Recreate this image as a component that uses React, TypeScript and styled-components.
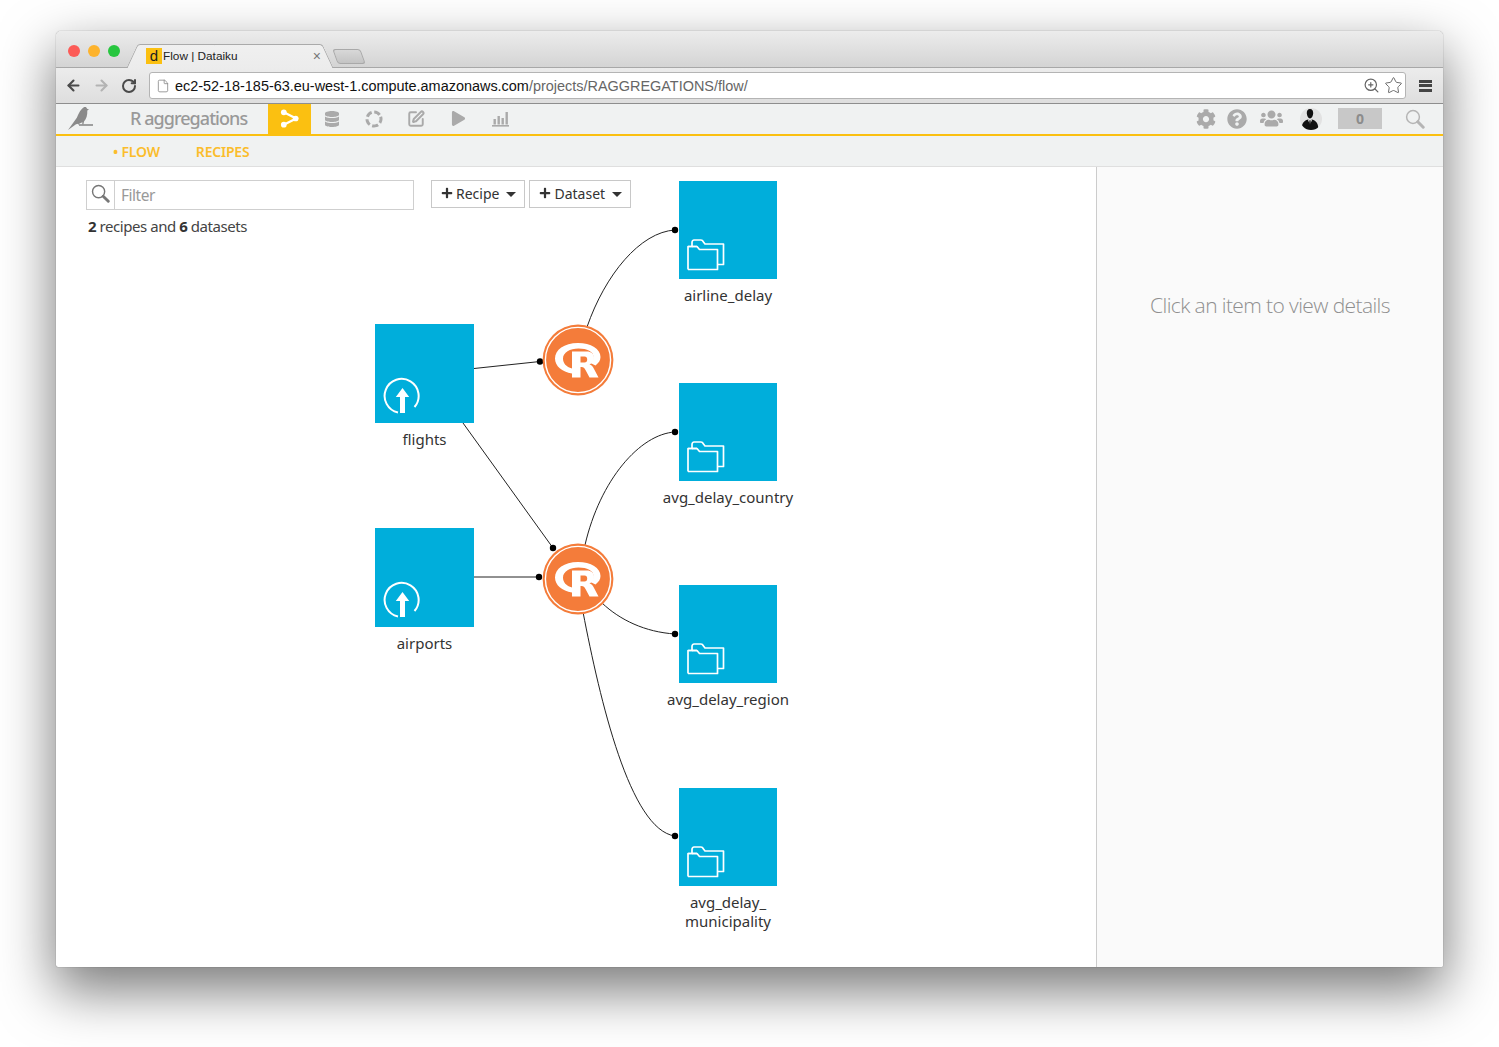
import React from 'react';
import styled, { createGlobalStyle } from 'styled-components';
import { ArrowLeft, ArrowRight, RotateCw, File, ZoomIn, Star, SquarePen } from 'lucide-react';
import { FaCog, FaQuestionCircle, FaUsers, FaDatabase, FaPlay, FaPlus } from 'react-icons/fa';

const UI_FONT = '"Noto Sans", "Open Sans", sans-serif';

const GlobalStyle = createGlobalStyle`
  html, body {
    margin: 0;
    padding: 0;
    background: #fff;
    overflow: hidden;
    height: 100%;
  }
  * { box-sizing: border-box; }
`;

const Page = styled.div`
  width: 1499px;
  height: 1047px;
  padding: 31px 56px 80px 56px;
  background: #fff;
`;

const Window = styled.div`
  width: 1387px;
  height: 936px;
  display: flex;
  flex-direction: column;
  border-radius: 5px 5px 2px 2px;
  box-shadow: 0 22px 54px 2px rgba(0, 0, 0, 0.52), 0 0 1px rgba(0, 0, 0, 0.6);
  overflow: hidden;
  background: #fff;
`;

const TabStrip = styled.div`
  height: 37px;
  flex: none;
  display: flex;
  align-items: flex-end;
  position: relative;
  padding-left: 84px;
  background: linear-gradient(#ececec, #d4d4d4);
  border-bottom: 1px solid #a8a8a8;
`;

const Light = styled.span<{ $color: string; $left: number }>`
  position: absolute;
  top: 14px;
  left: ${(p) => p.$left}px;
  width: 12px;
  height: 12px;
  border-radius: 50%;
  background: ${(p) => p.$color};
`;

const Tab = styled.div`
  position: relative;
  width: 180px;
  height: 24px;
  margin-bottom: -1px;
  display: flex;
  align-items: center;
  gap: 1px;
  padding: 0 0 0 6px;
  font-family: "Liberation Sans", Arial, sans-serif;
  font-size: 11.8px;
  color: #222;
  z-index: 1;

  &::before,
  &::after {
    content: '';
    position: absolute;
    top: 0;
    bottom: 0;
    width: 60%;
    background: linear-gradient(#f0f0f0, #ececec);
    border-top: 1px solid #aaa;
    z-index: -1;
  }
  &::before {
    left: -8px;
    transform: skewX(-25deg);
    border-left: 1px solid #aaa;
    border-radius: 3px 0 0 0;
  }
  &::after {
    right: -8px;
    transform: skewX(25deg);
    border-right: 1px solid #aaa;
    border-radius: 0 3px 0 0;
  }
`;

const Favicon = styled.span`
  width: 16px;
  height: 16px;
  flex: none;
  background: #fbc011;
  color: #222;
  font-size: 15px;
  line-height: 15px;
  text-align: center;
`;

const TabClose = styled.span`
  margin-left: auto;
  margin-right: -1px;
  color: #777;
  font-size: 14px;
`;

const NewTab = styled.div`
  width: 28px;
  height: 15px;
  margin: 0 0 3px 15px;
  border: 1px solid #a9a9a9;
  border-radius: 3px;
  background: linear-gradient(#d8d8d8, #c4c4c4);
  transform: skewX(20deg);
`;

const AddressRow = styled.div`
  height: 36px;
  flex: none;
  display: flex;
  align-items: center;
  padding: 0 11px 0 9px;
  gap: 11px;
  background: linear-gradient(#ececec, #dedede);
  border-bottom: 1px solid #8e8e8e;
`;

const NavButton = styled.span<{ $faded?: boolean }>`
  display: flex;
  color: ${(p) => (p.$faded ? '#b3b3b3' : '#4a4a4a')};
`;

const AddressBar = styled.div`
  flex: 1;
  height: 27px;
  margin-left: 1px;
  display: flex;
  align-items: center;
  padding: 0 2px 0 6px;
  background: #fff;
  border: 1px solid #b4b4b4;
  border-radius: 3px;
  font-family: "Liberation Sans", Arial, sans-serif;
  font-size: 14.45px;
  color: #111;
`;

const FileGap = styled.span`
  width: 5px;
`;

const UrlPath = styled.span`
  color: #666;
`;

const UrlIcons = styled.span`
  margin-left: auto;
  display: flex;
  align-items: center;
  gap: 4px;
  color: #666;
`;

const MenuBars = styled.span`
  width: 13px;
  height: 12px;
  margin-left: 2px;
  border-top: 3px solid #444;
  border-bottom: 3px solid #444;
  position: relative;
  &::after {
    content: '';
    position: absolute;
    left: 0;
    right: 0;
    top: 1.5px;
    height: 3px;
    background: #444;
  }
`;

const AppBar = styled.div`
  height: 32px;
  flex: none;
  display: flex;
  align-items: stretch;
  background: #f0f2f2;
  border-bottom: 2px solid #fbc011;
  color: #aaa;
`;

const Logo = styled.div`
  width: 74px;
  display: flex;
  align-items: center;
  padding-left: 12px;
`;

const ProjectName = styled.div`
  width: 138px;
  display: flex;
  align-items: center;
  font-family: ${UI_FONT};
  font-size: 18px;
  font-weight: 500;
  letter-spacing: -0.95px;
  color: #999;
  padding-bottom: 2px;
`;

const AppTab = styled.div<{ $active?: boolean }>`
  width: ${(p) => (p.$active ? 43 : 42)}px;
  display: flex;
  align-items: center;
  justify-content: center;
  padding-bottom: 1px;
  color: ${(p) => (p.$active ? '#fff' : '#aaa')};
  background: ${(p) => (p.$active ? '#fbc011' : 'transparent')};
`;

const AppBarRight = styled.div`
  margin-left: auto;
  display: flex;
  align-items: center;
  padding: 0 18px 1px 0;
  color: #aaa;
`;

const RightIcon = styled.span<{ $w: number }>`
  width: ${(p) => p.$w}px;
  display: flex;
  justify-content: center;
`;

const Avatar = styled.span`
  width: 22px;
  height: 22px;
  margin: 0 16px 0 11px;
  border-radius: 50%;
  background: #e2e2e2;
  overflow: hidden;
  display: flex;
`;

const Counter = styled.span`
  width: 44px;
  height: 21px;
  background: #c8c8c8;
  color: #8c8c8c;
  font-family: ${UI_FONT};
  font-size: 14px;
  font-weight: 700;
  line-height: 22px;
  text-align: center;
  margin-right: 23px;
`;

const SubNav = styled.div`
  height: 31px;
  flex: none;
  display: flex;
  align-items: center;
  padding-left: 57px;
  gap: 36px;
  background: #f0f2f2;
  border-bottom: 1px solid #dfdfdf;
`;

const SubNavItem = styled.span`
  font-family: ${UI_FONT};
  font-size: 14px;
  font-weight: 600;
  letter-spacing: -0.2px;
  color: #fbbd2c;
`;

const Body = styled.div`
  flex: 1;
  display: flex;
  min-height: 0;
`;

const FlowPane = styled.div`
  position: relative;
  width: 1040px;
  flex: none;
  padding: 13px 0 0 30px;
  font-family: ${UI_FONT};
`;

const Toolbar = styled.div`
  display: flex;
  align-items: flex-start;
`;

const FilterBox = styled.div`
  width: 328px;
  height: 30px;
  display: flex;
  border: 1px solid #cfcfcf;
  margin-right: 17px;
  background: #fff;
`;

const FilterIcon = styled.span`
  width: 28px;
  display: flex;
  align-items: center;
  justify-content: center;
  color: #777;
  border-right: 1px solid #cfcfcf;
  padding-bottom: 3px;
`;

const FilterInput = styled.span`
  padding-left: 6px;
  font-size: 15.5px;
  letter-spacing: -0.5px;
  line-height: 29px;
  color: #999;
`;

const DropButton = styled.button`
  height: 28px;
  margin-right: 4px;
  padding: 0 8px 2px 9px;
  display: flex;
  align-items: center;
  gap: 3px;
  background: #fff;
  border: 1px solid #c8c8c8;
  font-family: ${UI_FONT};
  font-size: 14px;
  color: #333;
`;

const Caret = styled.span`
  width: 0;
  height: 0;
  margin: 2px 0 0 4px;
  border-left: 5px solid transparent;
  border-right: 5px solid transparent;
  border-top: 5px solid #333;
`;

const Summary = styled.div`
  margin: 6px 0 0 2px;
  font-size: 15px;
  letter-spacing: -0.45px;
  color: #444;
  b { color: #333; }
`;

const Edges = styled.svg`
  position: absolute;
  inset: 0;
  width: 100%;
  height: 100%;
  pointer-events: none;
`;

const DatasetNode = styled.div<{ $x: number; $y: number; $size: number }>`
  position: absolute;
  left: ${(p) => p.$x - 56}px;
  top: ${(p) => p.$y - 167}px;
  width: ${(p) => p.$size}px;
`;

const DatasetBox = styled.div<{ $size: number }>`
  width: ${(p) => p.$size}px;
  height: ${(p) => p.$size}px;
  background: #00aedb;
  display: flex;
  align-items: flex-end;
  padding: 0 0 8px 8px;
  color: #fff;
`;

const NodeLabel = styled.div<{ $size: number }>`
  position: absolute;
  top: ${(p) => p.$size + 7}px;
  left: -40px;
  right: -40px;
  font-size: 15px;
  line-height: 19px;
  text-align: center;
  color: #333;
`;

const RecipeNode = styled.div<{ $x: number; $y: number }>`
  position: absolute;
  left: ${(p) => p.$x - 56 - 36}px;
  top: ${(p) => p.$y - 167 - 36}px;
  width: 72px;
  height: 72px;
`;

const SidePanel = styled.aside`
  flex: 1;
  background: #fafafa;
  border-left: 1px solid #ccc;
  padding-top: 124px;
  text-align: center;
  font-family: "Open Sans", sans-serif;
  font-weight: 300;
  font-size: 21px;
  letter-spacing: -0.6px;
  color: #8f8f8f;
`;

const FlowIcon = ({ size = 19 }: { size?: number }) => (
  <svg width={size} height={size} viewBox="0 0 20 20" fill="none" stroke="currentColor">
    <path d="M4 3.5 17 10 4 16.5" strokeWidth="2.4" />
    <circle cx="4" cy="3.5" r="3" fill="currentColor" stroke="none" />
    <circle cx="16.5" cy="10" r="3" fill="currentColor" stroke="none" />
    <circle cx="4" cy="16.5" r="3" fill="currentColor" stroke="none" />
  </svg>
);

const BirdLogo = () => (
  <svg width="26" height="26" viewBox="0 0 26 26" fill="#8a8a8a">
    <path d="M0 24 9 11.5C10.5 7.5 13 3 15.5 1.5 17 .5 18.8 1.2 19 2.7L21 3.6 19.3 4.6C19.5 9 18.5 13 16 15.4L15.4 18.5 14.2 18.5 14.4 16.3 11.5 17.4 11.2 18.5 10 18.5 10.2 17.7 8 18.2Z" />
    <rect x="11" y="18.2" width="14" height="1.6" />
  </svg>
);

const DashedRing = () => (
  <svg width="18" height="18" viewBox="0 0 18 18" fill="none" stroke="currentColor" strokeWidth="3">
    <circle cx="9" cy="9" r="7" strokeDasharray="6.2 2.6" transform="rotate(-18 9 9)" />
  </svg>
);

const Bars = () => (
  <svg width="18" height="18" viewBox="-1 0 18 18" fill="currentColor">
    <rect x="0" y="15" width="18" height="1.6" />
    <rect x="1.5" y="9" width="2.4" height="5.5" />
    <rect x="5.5" y="6" width="2.4" height="8.5" />
    <rect x="9.5" y="8" width="2.4" height="6.5" />
    <rect x="13.5" y="2" width="2.4" height="12.5" />
  </svg>
);

const Magnifier = ({ size, color }: { size: number; color: string }) => (
  <svg width={size} height={size} viewBox="0 0 20 20" fill="none" stroke={color}>
    <circle cx="8" cy="8" r="6.4" strokeWidth="1.5" />
    <path d="M12.8 12.8 18.2 18.2" strokeWidth="3" strokeLinecap="round" />
  </svg>
);

const Silhouette = () => (
  <svg width="22" height="22" viewBox="0 0 22 22">
    <path d="M10 1C7.8 1 6.6 3 6.8 5.5 7 8 8.3 10.5 10 10.5 11.7 10.5 13 8 13.2 5.5 13.4 3 12.2 1 10 1Z" fill="#111" />
    <path d="M1.5 22C1.8 15.5 3.5 13 8 11.6L10 12.5 12 11.6C16.5 13 18.2 15.5 18.5 22Z" fill="#111" />
    <path d="M8 11.8 10 17 12 11.8 10 12.5Z" fill="#fff" />
    <path d="M9.4 12.6H10.6L11 17.5 10 19 9 17.5Z" fill="#111" />
  </svg>
);

const UploadIcon = () => (
  <svg width="38" height="38" viewBox="0 0 38 38" fill="none" stroke="currentColor">
    <path d="M15 35.5A17 17 0 1 1 31.5 30" strokeWidth="2" />
    <path d="M17 36V20H12.8L19.5 11 26.2 20H22V36Z" fill="currentColor" stroke="none" />
  </svg>
);

const FolderIcon = () => (
  <svg width="38" height="32" viewBox="0 0 38 32" fill="none" stroke="currentColor" strokeWidth="1.7" strokeLinejoin="round">
    <path d="M1 30.5V7.5H5V3.5C5 2 6 1 7 1H14C15 1 16 2 16.5 3L18 5H36.5V25.5H30.5" />
    <path d="M1 30.5H30.5V10.5H12.5L10 7.5H1" />
    <path d="M5 7.5H10" />
  </svg>
);

const RLogo = () => (
  <svg width="72" height="72" viewBox="0 0 72 72">
    <circle cx="36" cy="36" r="35.4" fill="#f47c3a" />
    <circle cx="36" cy="36" r="32.6" fill="none" stroke="#fff" strokeWidth="1.4" />
    <path
      fillRule="evenodd"
      fill="#fff"
      d="M36 19C22 19 13 26 13 34.5 13 42 20 48 30 49.5L30 44.5C24 43 21 39 21 34.5 21 28.5 28 24.5 36.5 24.5 45 24.5 51.5 27.5 51.5 33 51.5 35.5 50.5 37.5 48.5 39L53.5 41.5C56.5 39 58.5 36.5 58.5 33 58.5 25 49 19 36 19Z"
    />
    <path
      fillRule="evenodd"
      fill="#fff"
      d="M30 27.5H44.5C49.5 27.5 52 30 52 34 52 37.5 50 39.5 47.5 40.2 49.5 41 50.5 42 51.5 44L56.5 53.5H47.5L43.5 46C42.5 44 41.5 43 39.5 43H38.5V53.5H30ZM38.5 32.5V38.5H42.5C44.3 38.5 45.2 37.3 45.2 35.5 45.2 33.7 44.3 32.5 42.5 32.5Z"
    />
  </svg>
);

interface Dataset {
  name: React.ReactNode;
  x: number;
  y: number;
  size: number;
  kind: 'upload' | 'folder';
}

const datasets: Dataset[] = [
  { name: 'airline_delay', x: 679, y: 181, size: 98, kind: 'folder' },
  { name: 'avg_delay_country', x: 679, y: 383, size: 98, kind: 'folder' },
  { name: 'avg_delay_region', x: 679, y: 585, size: 98, kind: 'folder' },
  { name: <>avg_delay_<br />municipality</>, x: 679, y: 788, size: 98, kind: 'folder' },
  { name: 'flights', x: 375, y: 324, size: 99, kind: 'upload' },
  { name: 'airports', x: 375, y: 528, size: 99, kind: 'upload' },
];

const edges = [
  'M474 368.5 540 361.5',
  'M587 327C605 275 640 232 675 230',
  'M463 423 553 548',
  'M474 577H539',
  'M585 545C600 480 640 434 675 432',
  'M602 603C620 620 645 632 675 634',
  'M583 612C600 700 630 830 675 836',
];

const dots = [
  [540, 361.5],
  [675, 230],
  [553, 548],
  [539, 577],
  [675, 432],
  [675, 634],
  [675, 836],
];

const App: React.FC = () => (
  <Page>
    <GlobalStyle />
    <Window>
      <TabStrip>
        <Light $color="#fc5b57" $left={12} />
        <Light $color="#fdb32d" $left={32} />
        <Light $color="#27c63f" $left={52} />
        <Tab>
          <Favicon>d</Favicon>
          Flow | Dataiku
          <TabClose>×</TabClose>
        </Tab>
        <NewTab />
      </TabStrip>
      <AddressRow>
        <NavButton><ArrowLeft size={17} strokeWidth={3} /></NavButton>
        <NavButton $faded><ArrowRight size={17} strokeWidth={3} /></NavButton>
        <NavButton><RotateCw size={16} strokeWidth={3} /></NavButton>
        <AddressBar>
          <NavButton $faded><File size={14} strokeWidth={1.4} color="#888" /></NavButton>
          <FileGap />
          ec2-52-18-185-63.eu-west-1.compute.amazonaws.com
          <UrlPath>/projects/RAGGREGATIONS/flow/</UrlPath>
          <UrlIcons>
            <ZoomIn size={17} strokeWidth={1.7} />
            <Star size={19} strokeWidth={1.2} />
          </UrlIcons>
        </AddressBar>
        <MenuBars />
      </AddressRow>
      <AppBar>
        <Logo><BirdLogo /></Logo>
        <ProjectName>R aggregations</ProjectName>
        <AppTab $active><FlowIcon /></AppTab>
        <AppTab><FaDatabase size={16} /></AppTab>
        <AppTab><DashedRing /></AppTab>
        <AppTab><SquarePen size={18} strokeWidth={2.6} /></AppTab>
        <AppTab><FaPlay size={15} /></AppTab>
        <AppTab><Bars /></AppTab>
        <AppBarRight>
          <RightIcon $w={30}><FaCog size={20} /></RightIcon>
          <RightIcon $w={32}><FaQuestionCircle size={20} /></RightIcon>
          <RightIcon $w={36}><FaUsers size={23} /></RightIcon>
          <Avatar><Silhouette /></Avatar>
          <Counter>0</Counter>
          <Magnifier size={20} color="#b5b5b5" />
        </AppBarRight>
      </AppBar>
      <SubNav>
        <SubNavItem>• FLOW</SubNavItem>
        <SubNavItem>RECIPES</SubNavItem>
      </SubNav>
      <Body>
        <FlowPane>
          <Edges viewBox="56 167 1040 800">
            {edges.map((d) => (
              <path key={d} d={d} fill="none" stroke="#222" strokeWidth="1" />
            ))}
            {dots.map(([cx, cy]) => (
              <circle key={`${cx}-${cy}`} cx={cx} cy={cy} r="3.2" fill="#000" />
            ))}
          </Edges>
          <Toolbar>
            <FilterBox>
              <FilterIcon><Magnifier size={19} color="#777" /></FilterIcon>
              <FilterInput>Filter</FilterInput>
            </FilterBox>
            <DropButton>
              <FaPlus size={12} /> Recipe
              <Caret />
            </DropButton>
            <DropButton>
              <FaPlus size={12} /> Dataset
              <Caret />
            </DropButton>
          </Toolbar>
          <Summary><b>2</b> recipes and <b>6</b> datasets</Summary>
          {datasets.map((d) => (
            <DatasetNode key={`${d.x}-${d.y}`} $x={d.x} $y={d.y} $size={d.size}>
              <DatasetBox $size={d.size}>{d.kind === 'upload' ? <UploadIcon /> : <FolderIcon />}</DatasetBox>
              <NodeLabel $size={d.size}>{d.name}</NodeLabel>
            </DatasetNode>
          ))}
          <RecipeNode $x={577.5} $y={359.7}><RLogo /></RecipeNode>
          <RecipeNode $x={577.5} $y={579}><RLogo /></RecipeNode>
        </FlowPane>
        <SidePanel>Click an item to view details</SidePanel>
      </Body>
    </Window>
  </Page>
);

export default App;
